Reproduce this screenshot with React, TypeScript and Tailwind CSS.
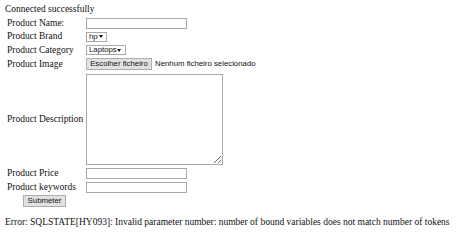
function Caret() {
  return (
    <svg width="4" height="3" viewBox="0 0 4 3" className="shrink-0">
      <path d="M0 0h4L2 3z" fill="#111" />
    </svg>
  );
}

export default function App() {
  const serif = { fontFamily: '"Liberation Serif", "Times New Roman", serif' };
  const label = "w-[79px] shrink-0 pl-[2px] whitespace-nowrap";
  const textInput = "h-[11px] w-[101px] border border-[#a9a9a9] bg-white";

  return (
    <div className="min-h-screen bg-white pl-[5px] pt-[4px] text-[9.5px] leading-[11px] text-[#111]" style={serif}>
      <div className="h-[11px]">Connected successfully</div>

      <div className="mt-[2px] flex flex-col font-['Liberation_Sans',Arial,sans-serif]">
        <div className="flex h-[13px] items-center gap-x-[2px]">
          <span className={label} style={serif}>Product Name:</span>
          <input type="text" className={textInput} />
        </div>

        <div className="flex h-[13px] items-center gap-x-[2px]">
          <span className={label} style={serif}>Product Brand</span>
          <div className="flex h-[10px] w-[21px] items-center justify-between border border-[#a9a9a9] bg-white pl-[2px] pr-[3px] text-[7.8px] leading-none">
            <span>hp</span>
            <Caret />
          </div>
        </div>

        <div className="flex h-[14px] items-center gap-x-[2px]">
          <span className={label} style={serif}>Product Category</span>
          <div className="flex h-[10px] w-[40px] items-center justify-between border border-[#a9a9a9] bg-white pl-[2px] pr-[4px] text-[7.8px] leading-none">
            <span>Laptops</span>
            <Caret />
          </div>
        </div>

        <div className="flex h-[14px] items-center gap-x-[2px]">
          <span className={label} style={serif}>Product Image</span>
          <button className="h-[12px] w-[66px] border border-[#adadad] bg-[#e1e1e1] text-[7.8px] leading-none">
            Escolher ficheiro
          </button>
          <span className="ml-[1px] text-[7.8px] leading-none">Nenhum ficheiro selecionado</span>
        </div>

        <div className="flex h-[96px] items-center gap-x-[2px]">
          <span className={label} style={serif}>Product Description</span>
          <textarea className="h-[91px] w-[137px] border border-[#a9a9a9] bg-white" />
        </div>

        <div className="flex h-[13px] items-center gap-x-[2px]">
          <span className={label} style={serif}>Product Price</span>
          <input type="text" className={textInput} />
        </div>

        <div className="flex h-[14px] items-center gap-x-[2px]">
          <span className={label} style={serif}>Product keywords</span>
          <input type="text" className={textInput} />
        </div>

        <div className="flex h-[13px] items-center">
          <div className="flex w-[79px] justify-center">
            <button className="h-[12px] w-[43px] border border-[#adadad] bg-[#e1e1e1] text-[7.8px] leading-none">
              Submeter
            </button>
          </div>
        </div>
      </div>

      <div className="mt-[10px] h-[11px] whitespace-nowrap">
        Error: SQLSTATE[HY093]: Invalid parameter number: number of bound variables does not match number of tokens
      </div>
    </div>
  );
}
